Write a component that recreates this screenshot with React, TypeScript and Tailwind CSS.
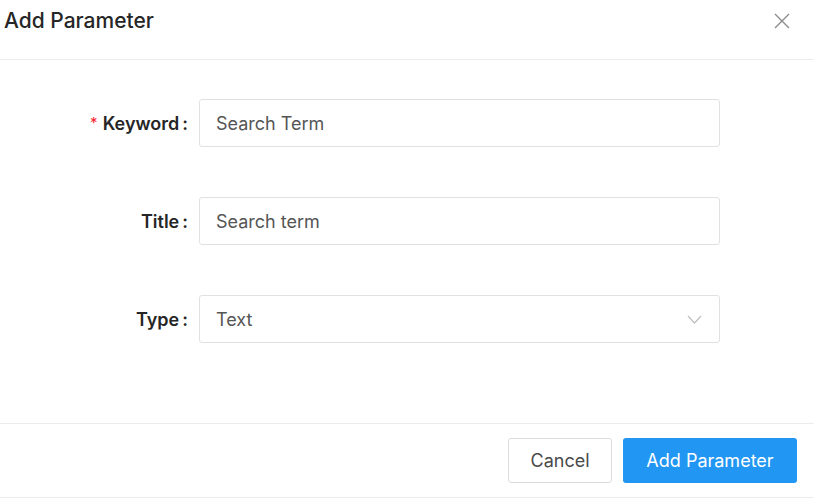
import React from "react";

function Row({ label, required, children }: { label: string; required?: boolean; children: React.ReactNode }) {
  return (
    <div className="flex items-center h-[48px]">
      <div className="w-[188px] flex justify-end items-center text-[18px] font-semibold text-[#262626]">
        {required && <span className="text-[#f5222d] mr-[5px] text-[15px] font-normal">*</span>}
        <span>{label}</span>
        <span className="ml-[3px]">:</span>
      </div>
      <div className="ml-[11px] w-[521px]">{children}</div>
    </div>
  );
}

export default function App() {
  return (
    <div
      className="w-[814px] h-[498px] bg-white flex flex-col overflow-hidden"
      style={{ fontFamily: "Inter, 'Noto Sans', sans-serif" }}
    >
      <div className="h-[60px] flex items-center justify-between pl-[4px] pr-[24px] border-b border-[#ececec] shrink-0">
        <div className="text-[21px] font-medium text-[#262626] -mt-[17px]">Add Parameter</div>
        <svg width="16" height="16" viewBox="0 0 16 16" className="-mt-[17px]">
          <path d="M1 1L15 15M15 1L1 15" stroke="#8c8c8c" strokeWidth="1.4" />
        </svg>
      </div>
      <div className="flex-1 flex flex-col gap-[50px] pt-[39px]">
        <Row label="Keyword" required>
          <div className="h-[48px] border border-[#e1e1e1] rounded-[3px] flex items-center pl-[16px] text-[18px] text-[#555]">
            Search Term
          </div>
        </Row>
        <Row label="Title">
          <div className="h-[48px] border border-[#e1e1e1] rounded-[3px] flex items-center pl-[16px] text-[18px] text-[#555]">
            Search term
          </div>
        </Row>
        <Row label="Type">
          <div className="h-[48px] border border-[#e1e1e1] rounded-[3px] flex items-center justify-between pl-[16px] pr-[17px] text-[18px] text-[#555]">
            <span>Text</span>
            <svg width="15" height="9" viewBox="0 0 15 9">
              <path d="M1 1L7.5 8L14 1" fill="none" stroke="#bfbfbf" strokeWidth="1.2" />
            </svg>
          </div>
        </Row>
      </div>
      <div className="h-[75px] border-t border-[#ececec] border-b flex items-start justify-end gap-[11px] pr-[17px] pt-[14px] shrink-0">
        <button className="h-[45px] w-[104px] border border-[#dcdcdc] rounded-[3px] bg-white text-[18px] text-[#4a4a4a]">
          Cancel
        </button>
        <button className="h-[45px] w-[174px] rounded-[3px] bg-[#2196f3] text-[18px] text-white">
          Add Parameter
        </button>
      </div>
    </div>
  );
}
